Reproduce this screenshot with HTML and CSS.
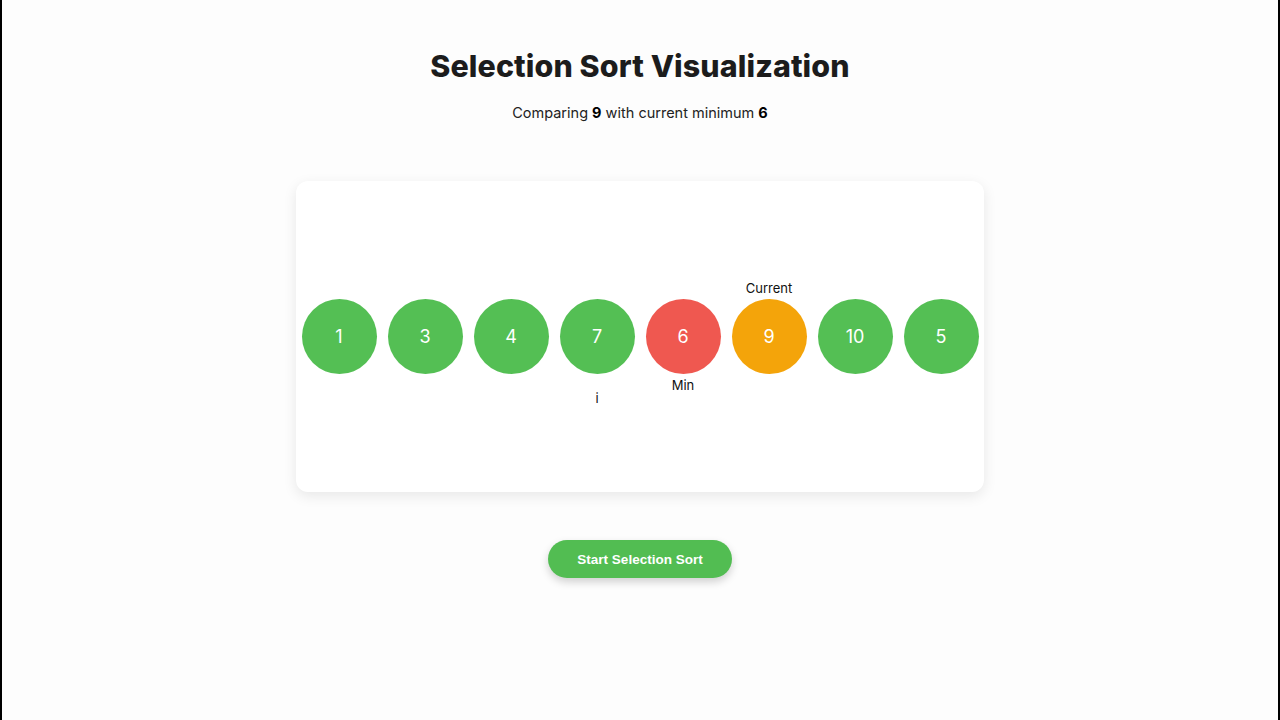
FILE: index.html
```html
<!DOCTYPE html>
<html>
<head>
<meta charset="utf-8">
<link rel="stylesheet" href="styles.css">
</head>
<body>
<main class="page">
  <h1 class="title">Selection Sort Visualization</h1>
  <p class="status">Comparing <b>9</b> with current minimum <b>6</b></p>
  <section class="board">
    <div class="row">
      <div class="node green">1</div>
      <div class="node green">3</div>
      <div class="node green">4</div>
      <div class="node green">7<span class="tag tag-i">i</span></div>
      <div class="node red">6<span class="tag tag-below">Min</span></div>
      <div class="node orange">9<span class="tag tag-above">Current</span></div>
      <div class="node green">10</div>
      <div class="node green">5</div>
    </div>
  </section>
  <button class="start">Start Selection Sort</button>
</main>
</body>
</html>
```
FILE: styles.css
```css
html, body {
  margin: 0;
  padding: 0;
  height: 100%;
}
body {
  background: #fdfdfd;
  border-left: 2px solid #000;
  border-right: 2px solid #000;
  box-sizing: border-box;
  font-family: "Inter", "Noto Sans", sans-serif;
  color: #111;
}
.page {
  display: flex;
  flex-direction: column;
  align-items: center;
  padding-top: 46px;
}
.title {
  margin: 0;
  font-size: 30.4px;
  line-height: 40px;
  font-weight: 800;
  color: #1c1c1c;
  letter-spacing: 0.1px;
}
.status {
  margin: 16px 0 0;
  font-size: 14.5px;
  line-height: 22px;
  color: #222;
}
.status b {
  font-weight: 700;
  color: #000;
}
.board {
  margin-top: 57px;
  width: 688px;
  height: 311px;
  background: #fff;
  border-radius: 12px;
  box-shadow: 0 4px 14px rgba(0, 0, 0, 0.09);
  display: flex;
  align-items: center;
  justify-content: center;
}
.row {
  display: flex;
  gap: 11px;
  align-items: center;
}
.node {
  position: relative;
  width: 75px;
  height: 75px;
  border-radius: 50%;
  display: flex;
  align-items: center;
  justify-content: center;
  color: #fff;
  font-size: 18px;
  font-weight: 400;
}
.green { background: #54bf54; }
.red { background: #ef5850; }
.orange { background: #f4a40a; }
.tag {
  position: absolute;
  left: 50%;
  transform: translateX(-50%);
  font-size: 13px;
  line-height: 16px;
  color: #111;
  white-space: nowrap;
}
.tag-above { bottom: 78px; }
.tag-below { top: 78px; }
.tag-i { top: 91px; }
.start {
  margin-top: 48px;
  width: 184px;
  height: 38px;
  border: none;
  border-radius: 19px;
  background: #52bd52;
  color: #fff;
  font-family: "Liberation Sans", Arial, sans-serif;
  font-weight: 700;
  font-size: 13.5px;
  box-shadow: 0 4px 8px rgba(0, 0, 0, 0.18);
  cursor: pointer;
}
```
